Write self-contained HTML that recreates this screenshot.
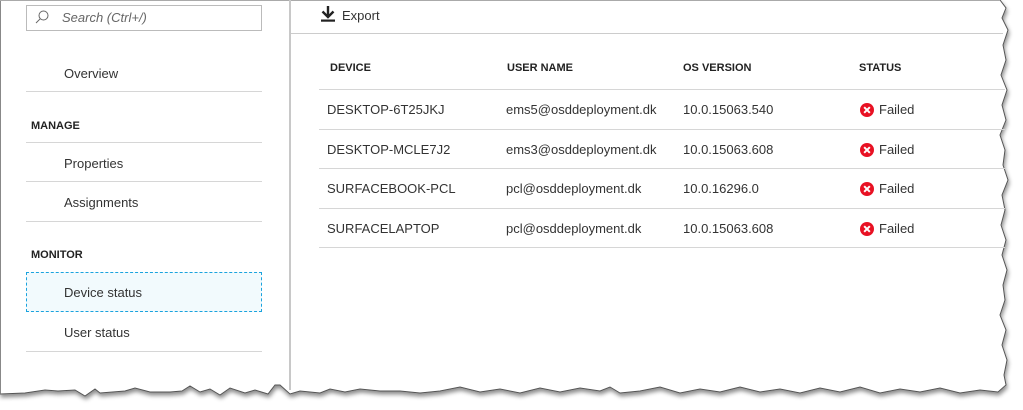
<!DOCTYPE html>
<html><head><meta charset="utf-8"><style>
body{margin:0;width:1023px;height:410px;background:#fff;position:relative;overflow:hidden;font-family:"Segoe UI","Liberation Sans",sans-serif;color:#333;font-size:13px}
.a{position:absolute;white-space:nowrap}
.hl{position:absolute;height:1px;background:#d6d6d6}
.h{font-weight:bold;font-size:11px;color:#222}
.x{position:absolute;width:14px;height:14px;border-radius:50%;background:#e81123}
.x:before,.x:after{content:"";position:absolute;left:3px;top:6px;width:8px;height:2px;background:#fff;transform:rotate(45deg)}
.x:after{transform:rotate(-45deg)}
</style></head><body>
<svg class="a" style="left:0;top:0" width="1023" height="410">
<defs><filter id="s" x="-5%" y="-5%" width="110%" height="115%"><feDropShadow dx="1" dy="3" stdDeviation="2" flood-color="#000" flood-opacity="0.45"/></filter></defs>
<polygon filter="url(#s)" fill="#fff" stroke="#555" stroke-width="1" points="0,0 1000,0 1006,8 1002,18 1008,30 1003,45 1006,60 1001,75 1007,90 1002,105 1006,120 1000,135 1005,150 1003,165 1008,180 1002,195 1005,210 1001,225 1006,240 1002,255 1007,270 1003,285 1005,300 1000,315 1006,330 1002,345 1007,360 1004,375 1006,385 998,392 980,390 960,393 940,388 920,392 900,389 880,393 860,387 840,392 820,388 800,393 780,389 760,392 740,387 720,392 700,389 680,393 660,387 640,391 620,393 610,387 600,391 580,388 560,392 540,388 520,393 500,389 480,392 460,387 440,391 420,393 400,391 380,391 360,389 345,392 330,389 320,393 300,391 290,394 280,385 275,385 268,394 255,390 245,393 230,388 220,395 210,389 200,392 190,386 182,391 170,392 150,392 135,388 125,391 100,393 95,389 85,396 75,390 58,391 45,390 25,393 0,394"/>
<line x1="0.5" y1="0" x2="0.5" y2="393" stroke="#888"/>
<line x1="0" y1="0.5" x2="1000" y2="0.5" stroke="#aaa"/>
<line x1="290" y1="0" x2="290" y2="390" stroke="#c8c8c8" stroke-width="2"/>
</svg>
<div class="a" style="left:26px;top:5px;width:234px;height:24px;border:1px solid #bbb"></div>
<svg class="a" style="left:34px;top:9px" width="16" height="16"><circle cx="9.5" cy="6.5" r="4.5" fill="none" stroke="#666" stroke-width="1"/><line x1="6.3" y1="9.7" x2="2" y2="14" stroke="#666"/></svg>
<div class="a" style="left:62px;top:10px;font-style:italic;color:#666">Search (Ctrl+/)</div>
<div class="a" style="left:64px;top:66px">Overview</div>
<div class="hl" style="left:26px;top:91px;width:236px"></div>
<div class="a h" style="left:31px;top:120px">MANAGE</div>
<div class="hl" style="left:26px;top:142px;width:236px"></div>
<div class="a" style="left:64px;top:156px">Properties</div>
<div class="hl" style="left:26px;top:181px;width:236px"></div>
<div class="a" style="left:64px;top:195px">Assignments</div>
<div class="hl" style="left:26px;top:221px;width:236px"></div>
<div class="a h" style="left:31px;top:249px">MONITOR</div>
<div class="a" style="left:26px;top:272px;width:234px;height:38px;border:1px dashed #1aa3de;background:#f2fafd"></div>
<div class="a" style="left:64px;top:285px">Device status</div>
<div class="a" style="left:64px;top:325px">User status</div>
<div class="hl" style="left:26px;top:351px;width:236px"></div>
<svg class="a" style="left:319px;top:5px" width="18" height="18"><path d="M9 1v11M3.5 6.5L9 12l5.5-5.5" fill="none" stroke="#222" stroke-width="2.4"/><rect x="2" y="14.5" width="14" height="2.2" fill="#222"/></svg>
<div class="a" style="left:342px;top:8px">Export</div>
<div class="hl" style="left:291px;top:33px;width:712px;background:#ccc"></div>
<div class="a h" style="left:330px;top:62px">DEVICE</div>
<div class="a h" style="left:507px;top:62px">USER NAME</div>
<div class="a h" style="left:683px;top:62px">OS VERSION</div>
<div class="a h" style="left:859px;top:62px">STATUS</div>
<div class="hl" style="left:319px;top:89px;width:686px"></div>
<div class="a" style="left:327px;top:102px">DESKTOP-6T25JKJ</div><div class="a" style="left:506px;top:102px">ems5@osddeployment.dk</div><div class="a" style="left:683px;top:102px">10.0.15063.540</div><div class="x" style="left:860px;top:103px"></div><div class="a" style="left:879px;top:102px">Failed</div>
<div class="hl" style="left:319px;top:129px;width:686px"></div>
<div class="a" style="left:327px;top:142px">DESKTOP-MCLE7J2</div><div class="a" style="left:506px;top:142px">ems3@osddeployment.dk</div><div class="a" style="left:683px;top:142px">10.0.15063.608</div><div class="x" style="left:860px;top:143px"></div><div class="a" style="left:879px;top:142px">Failed</div>
<div class="hl" style="left:319px;top:168px;width:686px"></div>
<div class="a" style="left:327px;top:181px">SURFACEBOOK-PCL</div><div class="a" style="left:506px;top:181px">pcl@osddeployment.dk</div><div class="a" style="left:683px;top:181px">10.0.16296.0</div><div class="x" style="left:860px;top:182px"></div><div class="a" style="left:879px;top:181px">Failed</div>
<div class="hl" style="left:319px;top:208px;width:686px"></div>
<div class="a" style="left:327px;top:221px">SURFACELAPTOP</div><div class="a" style="left:506px;top:221px">pcl@osddeployment.dk</div><div class="a" style="left:683px;top:221px">10.0.15063.608</div><div class="x" style="left:860px;top:222px"></div><div class="a" style="left:879px;top:221px">Failed</div>
<div class="hl" style="left:319px;top:247px;width:686px"></div>
</body></html>
